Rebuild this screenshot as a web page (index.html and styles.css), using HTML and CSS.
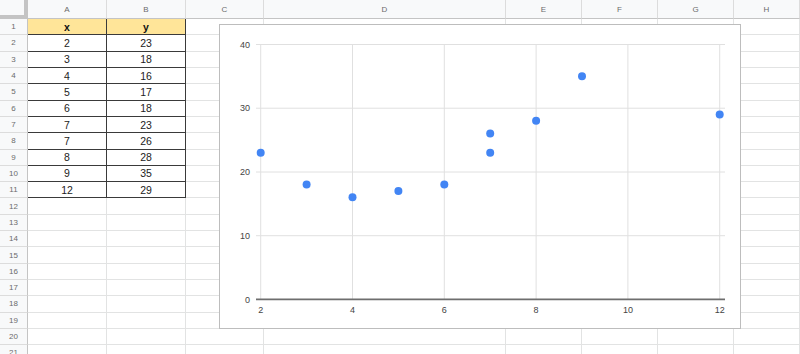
FILE: index.html
```html
<!DOCTYPE html>
<html>
<head>
<meta charset="utf-8">
<link rel="stylesheet" href="styles.css">
</head>
<body>
<div class="sheet">
  <div class="grid">
    <div class="corner"></div><div class="ch">A</div><div class="ch">B</div><div class="ch">C</div><div class="ch">D</div><div class="ch">E</div><div class="ch">F</div><div class="ch">G</div><div class="ch">H</div>

    <div class="rh">1</div><div class="c t hd tl">x</div><div class="c t hd">y</div><div class="c"></div><div class="c"></div><div class="c"></div><div class="c"></div><div class="c"></div><div class="c"></div>
    <div class="rh">2</div><div class="c t tl">2</div><div class="c t">23</div><div class="c"></div><div class="c"></div><div class="c"></div><div class="c"></div><div class="c"></div><div class="c"></div>
    <div class="rh">3</div><div class="c t tl">3</div><div class="c t">18</div><div class="c"></div><div class="c"></div><div class="c"></div><div class="c"></div><div class="c"></div><div class="c"></div>
    <div class="rh">4</div><div class="c t tl">4</div><div class="c t">16</div><div class="c"></div><div class="c"></div><div class="c"></div><div class="c"></div><div class="c"></div><div class="c"></div>
    <div class="rh">5</div><div class="c t tl">5</div><div class="c t">17</div><div class="c"></div><div class="c"></div><div class="c"></div><div class="c"></div><div class="c"></div><div class="c"></div>
    <div class="rh">6</div><div class="c t tl">6</div><div class="c t">18</div><div class="c"></div><div class="c"></div><div class="c"></div><div class="c"></div><div class="c"></div><div class="c"></div>
    <div class="rh">7</div><div class="c t tl">7</div><div class="c t">23</div><div class="c"></div><div class="c"></div><div class="c"></div><div class="c"></div><div class="c"></div><div class="c"></div>
    <div class="rh">8</div><div class="c t tl">7</div><div class="c t">26</div><div class="c"></div><div class="c"></div><div class="c"></div><div class="c"></div><div class="c"></div><div class="c"></div>
    <div class="rh">9</div><div class="c t tl">8</div><div class="c t">28</div><div class="c"></div><div class="c"></div><div class="c"></div><div class="c"></div><div class="c"></div><div class="c"></div>
    <div class="rh">10</div><div class="c t tl">9</div><div class="c t">35</div><div class="c"></div><div class="c"></div><div class="c"></div><div class="c"></div><div class="c"></div><div class="c"></div>
    <div class="rh">11</div><div class="c t tl">12</div><div class="c t">29</div><div class="c"></div><div class="c"></div><div class="c"></div><div class="c"></div><div class="c"></div><div class="c"></div>
    <div class="rh">12</div><div class="c"></div><div class="c"></div><div class="c"></div><div class="c"></div><div class="c"></div><div class="c"></div><div class="c"></div><div class="c"></div>
    <div class="rh">13</div><div class="c"></div><div class="c"></div><div class="c"></div><div class="c"></div><div class="c"></div><div class="c"></div><div class="c"></div><div class="c"></div>
    <div class="rh">14</div><div class="c"></div><div class="c"></div><div class="c"></div><div class="c"></div><div class="c"></div><div class="c"></div><div class="c"></div><div class="c"></div>
    <div class="rh">15</div><div class="c"></div><div class="c"></div><div class="c"></div><div class="c"></div><div class="c"></div><div class="c"></div><div class="c"></div><div class="c"></div>
    <div class="rh">16</div><div class="c"></div><div class="c"></div><div class="c"></div><div class="c"></div><div class="c"></div><div class="c"></div><div class="c"></div><div class="c"></div>
    <div class="rh">17</div><div class="c"></div><div class="c"></div><div class="c"></div><div class="c"></div><div class="c"></div><div class="c"></div><div class="c"></div><div class="c"></div>
    <div class="rh">18</div><div class="c"></div><div class="c"></div><div class="c"></div><div class="c"></div><div class="c"></div><div class="c"></div><div class="c"></div><div class="c"></div>
    <div class="rh">19</div><div class="c"></div><div class="c"></div><div class="c"></div><div class="c"></div><div class="c"></div><div class="c"></div><div class="c"></div><div class="c"></div>
    <div class="rh">20</div><div class="c"></div><div class="c"></div><div class="c"></div><div class="c"></div><div class="c"></div><div class="c"></div><div class="c"></div><div class="c"></div>
    <div class="rh">21</div><div class="c"></div><div class="c"></div><div class="c"></div><div class="c"></div><div class="c"></div><div class="c"></div><div class="c"></div><div class="c"></div>
  </div>

  <div class="chart">
    <svg class="plot" width="520" height="303" viewBox="0 0 520 303">
      <g class="grid-v">
        <line x1="40.7" y1="19.5" x2="40.7" y2="274.3"/>
        <line x1="132.5" y1="19.5" x2="132.5" y2="274.3"/>
        <line x1="224.3" y1="19.5" x2="224.3" y2="274.3"/>
        <line x1="316.1" y1="19.5" x2="316.1" y2="274.3"/>
        <line x1="407.9" y1="19.5" x2="407.9" y2="274.3"/>
        <line x1="499.7" y1="19.5" x2="499.7" y2="274.3"/>
      </g>
      <g class="grid-h">
        <line x1="36" y1="19.5" x2="505" y2="19.5"/>
        <line x1="36" y1="83.2" x2="505" y2="83.2"/>
        <line x1="36" y1="147" x2="505" y2="147"/>
        <line x1="36" y1="210.7" x2="505" y2="210.7"/>
      </g>
      <line class="axis" x1="36" y1="274.4" x2="505" y2="274.4"/>
      <g class="ylab">
        <text x="30" y="22.7">40</text>
        <text x="30" y="86.4">30</text>
        <text x="30" y="150.1">20</text>
        <text x="30" y="213.8">10</text>
        <text x="30" y="277.6">0</text>
      </g>
      <g class="xlab">
        <text x="40.7" y="287.8">2</text>
        <text x="132.5" y="287.8">4</text>
        <text x="224.3" y="287.8">6</text>
        <text x="316.1" y="287.8">8</text>
        <text x="407.9" y="287.8">10</text>
        <text x="499.7" y="287.8">12</text>
      </g>
      <g class="pts">
        <circle cx="40.7" cy="127.7" r="4"/>
        <circle cx="86.6" cy="159.6" r="4"/>
        <circle cx="132.5" cy="172.3" r="4"/>
        <circle cx="178.4" cy="165.9" r="4"/>
        <circle cx="224.3" cy="159.6" r="4"/>
        <circle cx="270.2" cy="127.7" r="4"/>
        <circle cx="270.2" cy="108.6" r="4"/>
        <circle cx="316.1" cy="95.8" r="4"/>
        <circle cx="362" cy="51.2" r="4"/>
        <circle cx="499.7" cy="89.4" r="4"/>
      </g>
    </svg>
  </div>
</div>
</body>
</html>
```

FILE: styles.css
```css
html, body {
  margin: 0;
  padding: 0;
  background: #ffffff;
  overflow: hidden;
}

.sheet {
  position: relative;
  width: 800px;
  height: 354px;
  overflow: hidden;
  font-family: "Liberation Sans", Arial, sans-serif;
}

.grid {
  display: grid;
  grid-template-columns: 28px 79px 79px 78px 242px 76px 76px 76px 1fr;
  grid-template-rows: 19px repeat(21, 16.32px);
}

.grid > div {
  box-sizing: border-box;
}

.corner {
  background: #f8f9fa;
  border-right: 4px solid #c4c4c4;
  border-bottom: 4px solid #c4c4c4;
}

.ch {
  background: #f8f9fa;
  border-right: 1px solid #dcdcdc;
  border-bottom: 1px solid #c4c4c4;
  color: #6b6b6b;
  font-size: 8px;
  display: flex;
  align-items: center;
  justify-content: center;
}

.rh {
  background: #f8f9fa;
  border-right: 1px solid #c4c4c4;
  border-bottom: 1px solid #dcdcdc;
  color: #6b6b6b;
  font-size: 8px;
  display: flex;
  align-items: center;
  justify-content: center;
}

.c {
  border-right: 1px solid #e2e3e3;
  border-bottom: 1px solid #e2e3e3;
}

.t {
  border-right: 1px solid #3a3a3a;
  border-bottom: 1px solid #3a3a3a;
  display: flex;
  align-items: center;
  justify-content: center;
  font-size: 10.5px;
  color: #222;
}

.hd {
  background: #ffe599;
  font-weight: bold;
  color: #111;
}

.chart {
  position: absolute;
  left: 219px;
  top: 24px;
  width: 522px;
  height: 305px;
  box-sizing: border-box;
  border: 1px solid #bdbdbd;
  background: #ffffff;
}

.plot {
  display: block;
}

.grid-v line,
.grid-h line {
  stroke: #e0e0e0;
  stroke-width: 1;
}

.axis {
  stroke: #6e6e6e;
  stroke-width: 1.6;
}

.ylab text,
.xlab text {
  font-family: "Liberation Sans", Arial, sans-serif;
  font-size: 9px;
  fill: #444444;
}

.ylab text {
  text-anchor: end;
}

.xlab text {
  text-anchor: middle;
}

.pts circle {
  fill: #4285f4;
}
```
